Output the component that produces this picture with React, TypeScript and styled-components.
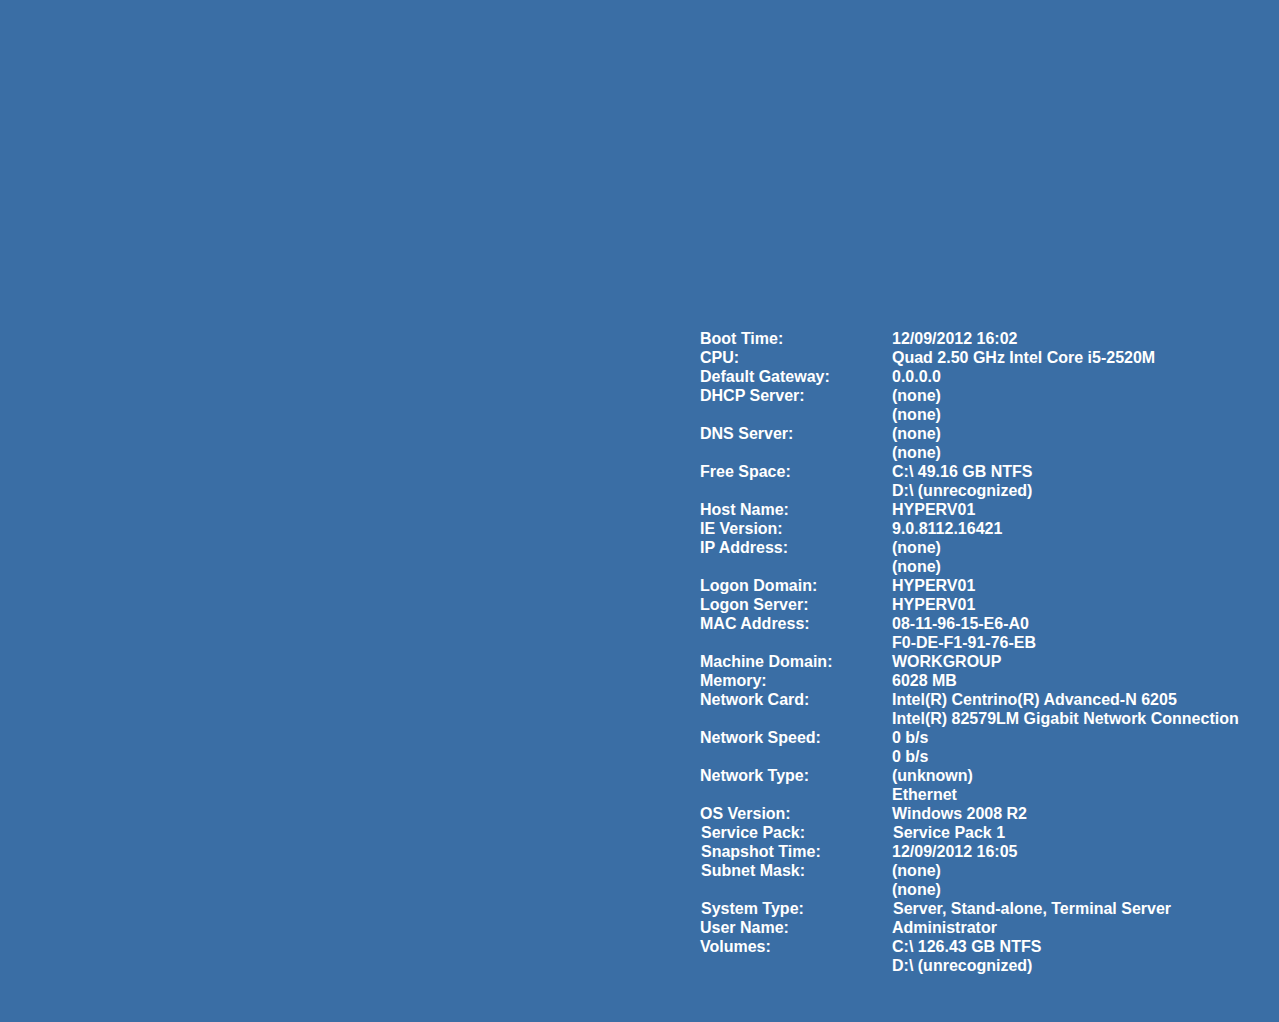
import React from "react";
import styled, { createGlobalStyle } from "styled-components";

const Global = createGlobalStyle`
  html, body { margin: 0; padding: 0; background: #3a6ea5; }
  body { font-family: "Liberation Sans", Arial, sans-serif; }
`;

const Desktop = styled.div`
  width: 1279px;
  height: 1022px;
  background: #3a6ea5;
  box-sizing: border-box;
  padding: 329px 0 0 700px;
  overflow: hidden;
`;

const InfoTable = styled.div`
  display: flex;
  flex-direction: column;
  color: #ffffff;
  font-weight: bold;
  font-size: 16px;
  line-height: 19px;
  white-space: nowrap;
`;

const Entry = styled.div`
  display: grid;
  grid-template-columns: 192px auto;
`;

const Label = styled.div<{ $shift?: number }>`
  padding-left: ${(p) => p.$shift ?? 0}px;
`;

const Values = styled.div<{ $shift?: number }>`
  display: flex;
  flex-direction: column;
  padding-left: ${(p) => p.$shift ?? 0}px;
`;

type Item = { label: string; values: string[]; ls?: number; vs?: number };

const items: Item[] = [
  { label: "Boot Time:", values: ["12/09/2012 16:02"] },
  { label: "CPU:", values: ["Quad 2.50 GHz Intel Core i5-2520M"] },
  { label: "Default Gateway:", values: ["0.0.0.0"] },
  { label: "DHCP Server:", values: ["(none)", "(none)"] },
  { label: "DNS Server:", values: ["(none)", "(none)"] },
  { label: "Free Space:", values: ["C:\\ 49.16 GB NTFS", "D:\\ (unrecognized)"] },
  { label: "Host Name:", values: ["HYPERV01"] },
  { label: "IE Version:", values: ["9.0.8112.16421"] },
  { label: "IP Address:", values: ["(none)", "(none)"] },
  { label: "Logon Domain:", values: ["HYPERV01"] },
  { label: "Logon Server:", values: ["HYPERV01"] },
  { label: "MAC Address:", values: ["08-11-96-15-E6-A0", "F0-DE-F1-91-76-EB"] },
  { label: "Machine Domain:", values: ["WORKGROUP"] },
  { label: "Memory:", values: ["6028 MB"] },
  {
    label: "Network Card:",
    values: [
      "Intel(R) Centrino(R) Advanced-N 6205",
      "Intel(R) 82579LM Gigabit Network Connection",
    ],
  },
  { label: "Network Speed:", values: ["0 b/s", "0 b/s"] },
  { label: "Network Type:", values: ["(unknown)", "Ethernet"] },
  { label: "OS Version:", values: ["Windows 2008 R2"] },
  { label: "Service Pack:", values: ["Service Pack 1"], ls: 1, vs: 1 },
  { label: "Snapshot Time:", values: ["12/09/2012 16:05"], ls: 1 },
  { label: "Subnet Mask:", values: ["(none)", "(none)"], ls: 1 },
  { label: "System Type:", values: ["Server, Stand-alone, Terminal Server"], ls: 1, vs: 1 },
  { label: "User Name:", values: ["Administrator"] },
  { label: "Volumes:", values: ["C:\\ 126.43 GB NTFS", "D:\\ (unrecognized)"] },
];

export default function App() {
  return (
    <>
      <Global />
      <Desktop>
        <InfoTable>
          {items.map((it) => (
            <Entry key={it.label}>
              <Label $shift={it.ls}>{it.label}</Label>
              <Values $shift={it.vs}>
                {it.values.map((v, i) => (
                  <span key={i}>{v}</span>
                ))}
              </Values>
            </Entry>
          ))}
        </InfoTable>
      </Desktop>
    </>
  );
}
